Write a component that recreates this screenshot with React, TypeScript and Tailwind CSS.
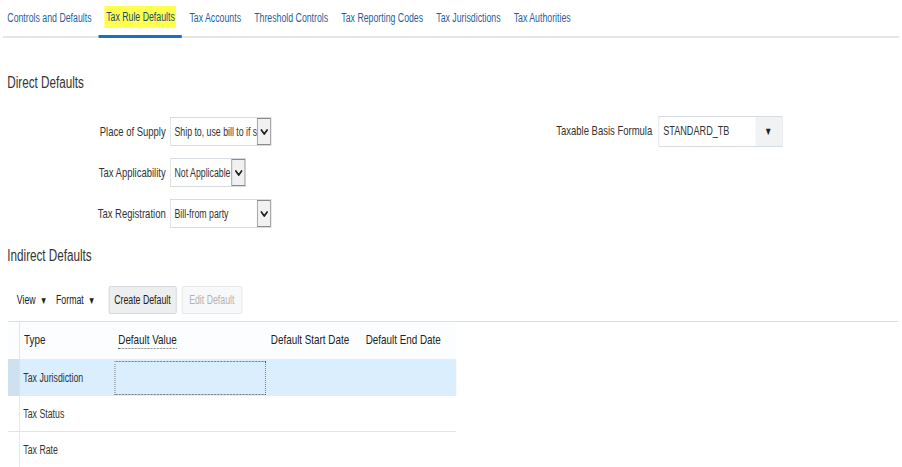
import { ChevronDown } from 'lucide-react'

const tabs = [
  'Controls and Defaults',
  'Tax Rule Defaults',
  'Tax Accounts',
  'Threshold Controls',
  'Tax Reporting Codes',
  'Tax Jurisdictions',
  'Tax Authorities',
]

const font = { fontFamily: '"Liberation Sans", Arial, sans-serif' }

function Select({ value, width }: { value: string; width: string }) {
  return (
    <div className={`flex items-stretch h-[29px] ${width} border border-[#d6dce2] bg-white`}>
      <span className="flex-1 flex items-center pl-[5px] text-[12px] text-[#333] whitespace-nowrap overflow-hidden">
        {value}
      </span>
      <span className="w-[19px] flex items-center justify-center border border-[#8a8a8a] bg-[#f1f1f1]">
        <ChevronDown size={16} strokeWidth={3} className="text-[#222]" />
      </span>
    </div>
  )
}

export default function App() {
  return (
    <div className="w-[902px] h-[467px] bg-white overflow-hidden text-[#333]" style={font}>
      {/* whole page is drawn narrow, like the screenshot */}
      <div className="w-[1236px] origin-top-left scale-x-[0.73]">
        {/* Tabs */}
        <div className="flex items-end h-[38px] mx-[4px] border-b-2 border-[#e6e6e6] pl-[6px]">
          {tabs.map((t, i) => (
            <div
              key={t}
              className={`flex items-center text-[12px] ${
                i === 1
                  ? 'h-[39px] -mb-[2px] border-b-[3px] border-[#1a6fc0] px-[8px] mr-[10px] -ml-[8px]'
                  : 'h-[36px] mr-[18px]'
              }`}
            >
              <span className={i === 1 ? 'bg-[#ffff4d] text-[#184a7a] px-[2px] py-[2px]' : 'text-[#1f5f9f]'}>
                {t}
              </span>
            </div>
          ))}
        </div>

        {/* Direct defaults */}
        <div className="pl-[10px] mt-[35px] text-[16px] text-[#333] leading-[20px]">Direct Defaults</div>

        <div className="flex mt-[24px]">
          <div className="flex flex-col gap-[12px] w-[400px]">
            <div className="flex items-center">
              <span className="w-[233px] text-right pr-[6px] text-[13px]">Place of Supply</span>
              <Select value="Ship to, use bill to if s" width="w-[139px]" />
            </div>
            <div className="flex items-center">
              <span className="w-[233px] text-right pr-[6px] text-[13px]">Tax Applicability</span>
              <Select value="Not Applicable" width="w-[104px]" />
            </div>
            <div className="flex items-center">
              <span className="w-[233px] text-right pr-[6px] text-[13px]">Tax Registration</span>
              <Select value="Bill-from party" width="w-[139px]" />
            </div>
          </div>
          <div className="flex items-center h-[30px] ml-[362px] -mt-[1px]">
            <span className="text-[13px] pr-[8px]">Taxable Basis Formula</span>
            <div className="flex items-stretch w-[170px] h-[31px] border border-[#d6dce2] bg-white">
              <span className="flex-1 flex items-center pl-[6px] text-[12.5px]">STANDARD_TB</span>
              <span className="w-[36px] flex items-center justify-center bg-[#f1f2f3] text-[11px] text-[#222]">▼</span>
            </div>
          </div>
        </div>

        {/* Indirect defaults */}
        <div className="pl-[10px] mt-[18px] text-[16px] leading-[20px]">Indirect Defaults</div>

        {/* Toolbar */}
        <div className="flex items-center mt-[20px] pl-[23px] text-[12px] h-[28px] text-[#222]">
          <span>View</span>
          <span className="ml-[6px] text-[10px]">▼</span>
          <span className="ml-[12px]">Format</span>
          <span className="ml-[6px] text-[10px]">▼</span>
          <button className="ml-[18px] w-[93px] h-[28px] border border-[#cfd4d9] rounded-[2px] bg-[#eceef0] text-[#222]">
            Create Default
          </button>
          <button className="ml-[7px] w-[83px] h-[28px] border border-[#e4e6e8] rounded-[2px] bg-[#f7f8f9] text-[#b3b3b3]">
            Edit Default
          </button>
        </div>

        {/* Table */}
        <div className="mt-[7px] ml-[11px] border-t border-[#d9dee3] w-[1219px]">
          <div className="w-[614px]">
            <div className="flex h-[37px] items-center text-[13.5px] text-[#222] bg-[#fcfdfe] whitespace-nowrap">
              <div className="w-[16px] self-stretch border-r border-[#d9dee3]" />
              <div className="w-[134px] pl-[6px]">Type</div>
              <div className="w-[210px] pl-[1px]">
                <span className="border-b border-dotted border-[#666] pb-[1px]">Default Value</span>
              </div>
              <div className="w-[130px]">Default Start Date</div>
              <div>Default End Date</div>
            </div>
            <div className="flex h-[37px] items-center text-[12px] bg-[#dbeefe]">
              <div className="w-[16px] self-stretch bg-[#cfe0ee]" />
              <div className="w-[130px] pl-[5px]">Tax Jurisdiction</div>
              <div className="w-[207px] h-[34px] border border-dotted border-[#555]" />
            </div>
            <div className="flex h-[36px] items-center text-[12px] border-b border-[#e2e5e8]">
              <div className="w-[16px] self-stretch border-r border-[#d9dee3]" />
              <div className="pl-[5px]">Tax Status</div>
            </div>
            <div className="flex h-[36px] items-center text-[12px]">
              <div className="w-[16px] self-stretch border-r border-[#d9dee3]" />
              <div className="pl-[5px]">Tax Rate</div>
            </div>
          </div>
        </div>
      </div>
    </div>
  )
}
